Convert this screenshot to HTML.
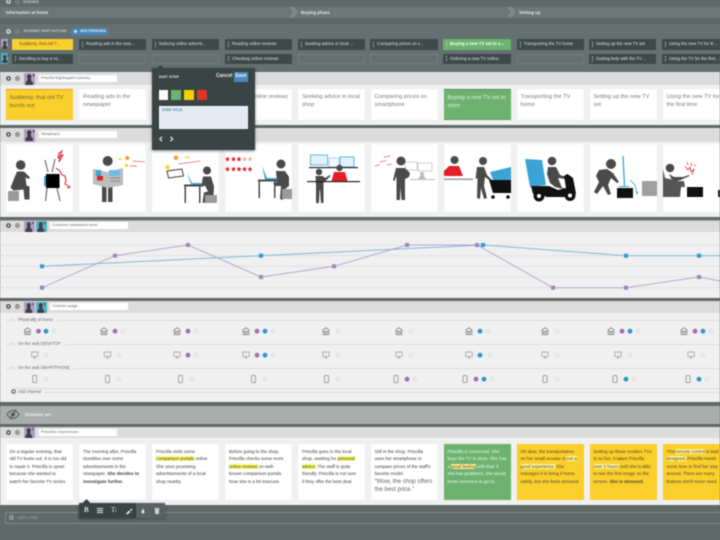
<!DOCTYPE html>
<html><head><meta charset="utf-8"><style>
html,body{margin:0;padding:0;background:#5f6968}
#p{position:relative;width:720px;height:540px;overflow:hidden;background:#5f6968;font-family:"Liberation Sans",sans-serif;filter:blur(.42px)}
#p div,#p svg.a{position:absolute}
.t{white-space:nowrap}
.chip{height:10.5px;line-height:10.5px;background:#3e4949;color:#dfe4e3;font-size:4.3px;padding-left:7px;box-sizing:border-box;white-space:nowrap;overflow:hidden;border-radius:.5px}
.chip:before{content:"";position:absolute;left:3px;top:2.5px;height:5px;border-left:1px dotted #c9d0cf}
.e{height:10.5px;border:1px solid #727c7b;box-sizing:border-box}
.head{left:0;width:720px;background:#dcdcdc}
.in{background:#fff;height:7px;line-height:7px;font-size:3.8px;color:#666;padding-left:2px;box-sizing:border-box;white-space:nowrap}
.card{background:#fff;width:67px;box-shadow:0 0 1px #ddd}
.st{top:89px;height:31px;font-size:5.7px;line-height:7.5px;color:#777;padding:5px 0 0 4px;box-sizing:border-box;white-space:nowrap;overflow:hidden}
.sb{top:144px;height:68px}
.ex{top:444px;height:56px;font-size:4.5px;line-height:7.5px;color:#3a3a3a;padding:3.5px 0 0 4px;box-sizing:border-box;white-space:nowrap;overflow:hidden}
.y{background:#fbfb66}
.ly{background:#fff48e;color:#444}
.lab{left:15px;font-size:4.2px;color:#666;background:#f0f0f0;padding:0 3px;white-space:nowrap}
.gl{left:6px;width:714px;height:.7px;background:#dcdcdc}
</style></head><body><div id="p">
<svg width="0" height="0" style="position:absolute"><defs>
<symbol id="g" viewBox="0 0 10 10"><circle cx="5" cy="5" r="3.2" fill="none" stroke="currentColor" stroke-width="2"/><path d="M5 0v2M5 8v2M0 5h2M8 5h2M1.5 1.5l1.4 1.4M7.1 7.1l1.4 1.4M8.5 1.5L7.1 2.9M2.9 7.1L1.5 8.5" stroke="currentColor" stroke-width="1.4"/></symbol>
<symbol id="ey" viewBox="0 0 10 10"><circle cx="5" cy="5" r="4" fill="none" stroke="currentColor" stroke-width="1.3"/><circle cx="5" cy="5" r="1.7" fill="currentColor"/></symbol>
<symbol id="pf" viewBox="0 0 11 12"><circle cx="5.2" cy="3.5" r="2.3" fill="#3e3e46"/><path d="M3.6 5.5h3.2l.8 3.2h1.4V12H1.6V8.7h1.2z" fill="#3e3e46"/><rect x="9.2" y="1" width="1" height="2.5" fill="#333"/></symbol>
<symbol id="h" viewBox="0 0 8 8"><path d="M.5 3.5L4 .6l3.5 2.9M1.2 3.2V7.6h5.6V3.2M3 4.5h2v3H3zM1.2 4.5h5.6" fill="none" stroke="#8d9190" stroke-width=".9"/></symbol>
<symbol id="m" viewBox="0 0 8 8"><path d="M.8 1h6.4v4.4H.8zM2.6 7h2.8M4 5.4V7" fill="none" stroke="#a9adac" stroke-width=".9"/></symbol>
<symbol id="ph" viewBox="0 0 8 8"><rect x="2" y=".5" width="4" height="7" rx=".8" fill="none" stroke="#9b9f9e" stroke-width=".9"/></symbol>
<symbol id="st" viewBox="0 0 10 10"><path d="M5 0l1.5 3.3 3.5.4-2.6 2.4.7 3.6L5 8 1.900 9.700l.7-3.600L0 3.700l3.500-.4z"/></symbol>
</defs></svg>

<!-- stages -->
<div style="left:0;top:7px;width:720px;height:10.500px;background:#6d7776"></div>
<svg class="a" style="left:6px;top:-1px" width="5" height="5" color="#e4e8e7"><use href="#g" width="5" height="5"/></svg>
<svg class="a" style="left:15px;top:-1px" width="5" height="5" color="#8a9392"><use href="#ey" width="5" height="5"/></svg>
<div class="t" style="left:23px;top:-1px;font-size:3.900px;line-height:5px;font-weight:bold;color:#cfd5d4">STAGES</div>
<div class="t" style="left:6px;top:9.500px;font-size:4.400px;line-height:6px;font-weight:bold;color:#e4e8e7">Information at home</div>
<div class="t" style="left:301px;top:9.500px;font-size:4.400px;line-height:6px;font-weight:bold;color:#e4e8e7">Buying phase</div>
<div class="t" style="left:519px;top:9.500px;font-size:4.400px;line-height:6px;font-weight:bold;color:#e4e8e7">Setting up</div>
<svg class="a" style="left:289px;top:6px" width="9" height="12"><path d="M1 .5L5 6 1 11.500M3.500 .5L7.500 6l-4 5.500" fill="none" stroke="#9ca5a4" stroke-width=".7"/></svg>
<svg class="a" style="left:507px;top:6px" width="9" height="12"><path d="M1 .5L5 6 1 11.500M3.500 .5L7.500 6l-4 5.500" fill="none" stroke="#9ca5a4" stroke-width=".7"/></svg>
<div style="left:0;top:17.500px;width:720px;height:6.500px;background:#5c6665"></div>

<!-- outline -->
<div style="left:0;top:24px;width:720px;height:48px;background:#657170"></div>
<svg class="a" style="left:6px;top:28.500px" width="5" height="5" color="#e8ebea"><use href="#g" width="5" height="5"/></svg>
<svg class="a" style="left:15px;top:28.500px" width="5" height="5" color="#8a9392"><use href="#ey" width="5" height="5"/></svg>
<div class="t" style="left:23px;top:28.500px;font-size:3.700px;line-height:5px;font-weight:bold;color:#c5cccb">JOURNEY MAP OUTLINE</div>
<div class="t" style="left:71px;top:28px;width:37px;height:7px;line-height:7px;background:#4a85b8;color:#e8f0f6;font-size:3.500px;font-weight:bold;padding-left:9px;box-sizing:border-box;border-radius:1px">ADD PERSONA</div>
<div style="left:73.500px;top:29.700px;width:3.500px;height:3.500px;border-radius:50%;background:#dfe8f0"></div>
<div style="left:1px;top:39px;width:7px;height:10px;background:#b39ec2"></div>
<svg class="a" style="left:1px;top:39.500px" width="8" height="9"><use href="#pf" width="8" height="9"/></svg>
<div style="left:1px;top:53px;width:7px;height:10.500px;background:#4fb2c4"></div>
<svg class="a" style="left:1px;top:54px" width="8" height="9"><use href="#pf" width="8" height="9"/></svg>

<div class="chip" style="left:12px;top:39px;width:60.500px;background:#fbcf2b;color:#5a5130">Suddenly, that old T…</div>
<div class="chip" style="left:79px;top:39px;width:66.500px">Reading ads in the new…</div>
<div class="chip" style="left:152px;top:39px;width:66.500px">Noticing online adverts…</div>
<div class="chip" style="left:225px;top:39px;width:66.500px">Reading online reviews</div>
<div class="chip" style="left:298px;top:39px;width:66.500px">Seeking advice in local …</div>
<div class="chip" style="left:370px;top:39px;width:67.500px">Comparing prices on s…</div>
<div class="chip" style="left:443px;top:39px;width:68px;background:#6db36f;color:#fff;font-weight:bold">Buying a new TV set in s…</div>
<div class="chip" style="left:516.500px;top:39px;width:67px">Transporting the TV home</div>
<div class="chip" style="left:589px;top:39px;width:67px">Setting up the new TV set</div>
<div class="chip" style="left:662px;top:39px;width:58px">Using the new TV for th…</div>

<div class="chip" style="left:12px;top:53.500px;width:60.500px">Deciding to buy a ne…</div>
<div class="e" style="left:79px;top:53.500px;width:66.500px"></div>
<div class="e" style="left:152px;top:53.500px;width:66.500px"></div>
<div class="chip" style="left:225px;top:53.500px;width:66.500px">Checking online reviews</div>
<div class="e" style="left:298px;top:53.500px;width:66.500px"></div>
<div class="e" style="left:370px;top:53.500px;width:67.500px"></div>
<div class="chip" style="left:443px;top:53.500px;width:68px">Ordering a new TV online</div>
<div class="e" style="left:516.500px;top:53.500px;width:67px"></div>
<div class="chip" style="left:589px;top:53.500px;width:67px">Getting help with the TV…</div>
<div class="chip" style="left:662px;top:53.500px;width:58px">Using the TV for the first…</div>

<!-- journey lane -->
<div style="left:0;top:72px;width:720px;height:53px;background:#f0f0f0"></div>
<div class="head" style="top:72px;height:13px"></div>
<svg class="a" style="left:6px;top:75.500px" width="5" height="5" color="#3e3e3e"><use href="#g" width="5" height="5"/></svg>
<svg class="a" style="left:14.500px;top:75.500px" width="5" height="5" color="#555"><use href="#ey" width="5" height="5"/></svg>
<div style="left:24px;top:73px;width:11px;height:12px;background:#b39ec2"></div>
<svg class="a" style="left:24px;top:73px" width="11" height="12"><use href="#pf" width="11" height="12"/></svg>
<div class="in" style="left:39px;top:74.500px;width:78px">Priscilla Nightingale's journey</div>

<div class="card st" style="left:5.500px;background:#fbcf2b;color:#6d6238;border-top:1.500px solid #e5a52a">Suddenly, that old TV<br>bursts out</div>
<div class="card st" style="left:79px">Reading ads in the<br>newspaper</div>
<div class="card st" style="left:152px">Noticing online<br>adverts</div>
<div class="card st" style="left:225px">Reading online reviews</div>
<div class="card st" style="left:298px">Seeking advice in local<br>shop</div>
<div class="card st" style="left:370.500px">Comparing prices on<br>smartphone</div>
<div class="card st" style="left:443.500px;width:67.500px;background:#6db36f;color:#e4f0e4;border-top:1.500px solid #4f8f52;border-bottom:1px solid #5f9f62">Buying a new TV set in<br>store</div>
<div class="card st" style="left:516.500px">Transporting the TV<br>home</div>
<div class="card st" style="left:589.500px">Setting up the new TV<br>set</div>
<div class="card st" style="left:662.500px;width:58px">Using the new TV for<br>the first time</div>

<div style="left:0;top:125px;width:720px;height:3px;background:#5f6b6a"></div>

<!-- storyboard lane -->
<div style="left:0;top:128px;width:720px;height:89px;background:#f0f0f0"></div>
<div class="head" style="top:128px;height:14px"></div>
<svg class="a" style="left:6px;top:131.500px" width="5" height="5" color="#3e3e3e"><use href="#g" width="5" height="5"/></svg>
<svg class="a" style="left:14.500px;top:131.500px" width="5" height="5" color="#555"><use href="#ey" width="5" height="5"/></svg>
<div style="left:24px;top:129px;width:11px;height:12.500px;background:#b39ec2"></div>
<svg class="a" style="left:24px;top:129px" width="11" height="12"><use href="#pf" width="11" height="12"/></svg>
<div class="in" style="left:39px;top:130.500px;width:78px">Storyboard</div>
<div class="card sb" style="left:5.500px"></div>
<div class="card sb" style="left:79px"></div>
<div class="card sb" style="left:152px"></div>
<div class="card sb" style="left:225px"></div>
<div class="card sb" style="left:298px"></div>
<div class="card sb" style="left:370.500px"></div>
<div class="card sb" style="left:443.500px;width:67.500px"></div>
<div class="card sb" style="left:516.500px"></div>
<div class="card sb" style="left:589.500px"></div>
<div class="card sb" style="left:662.500px;width:58px"></div>

<svg class="a" style="left:0;top:0" width="720" height="217">
<g fill="#4a4a4a" stroke="none">
<!-- 1 -->
<rect x="8" y="191" width="11" height="10" fill="#9b9b9b"/>
<circle cx="20.700" cy="165" r="4.800"/>
<path d="M17 171.500h7l6 6-1.500 1.500-3-1.500 1 8 3 1v13h-5l-1-10-10 1-3-3z"/>
<path d="M48 172l-3-12M52 172l3-13M47 188l-1.500 13M57 188l3 13" stroke="#777" stroke-width="1.300" fill="none"/>
<rect x="44" y="176" width="3" height="10" fill="#3ba4d6"/>
<rect x="46" y="174" width="13.500" height="14" fill="#000"/>
<path d="M59 153l3-2-2 5 3-1-4 7 1-5-2 1zM56 168l4 3 2 4 3 1 1 4-1 4 5 3-3 1" fill="none" stroke="#e51e2a" stroke-width="1"/>
<!-- 2 -->
<circle cx="107.700" cy="161" r="5"/>
<rect x="102" y="184" width="4.500" height="18"/><rect x="108" y="184" width="4.500" height="18"/>
<path d="M93 169l14 3 16-4v17l-15 3-15-4z" fill="#bdbdbd"/>
<rect x="96" y="170" width="5" height="6" fill="#3ba4d6"/><rect x="109" y="170" width="11" height="6" fill="#6cc0e8"/>
<rect x="97" y="176" width="6" height="4.500" fill="#e51e2a"/>
<path d="M110 178h10M110 181h10" stroke="#777" stroke-width=".8"/>
<rect x="118" y="158.500" width="4" height="1.300" fill="#f4d21c"/>
<use href="#st" x="124.500" y="155" width="5.500" height="5.500" fill="#f18c22"/>
<rect x="125" y="164" width="3" height="3" fill="#f4d21c"/>
<path d="M133 161l12 1M130 166h7" stroke="#e8424c" stroke-width=".9" stroke-dasharray="1.200 .5"/>
<!-- 3 -->
<use href="#st" x="173" y="154.500" width="6" height="6" fill="#f18c22"/>
<rect x="185" y="156.500" width="4.500" height="1.300" fill="#f4d21c"/>
<path d="M179 164l21-3" stroke="#e8424c" stroke-width=".9" stroke-dasharray="1.200 .5"/>
<use href="#st" x="164.500" y="164" width="6" height="6" fill="#f4d21c"/>
<path d="M167 171l15-2 1.500 7-15 2z" fill="#fff" stroke="#333" stroke-width=".9"/>
<circle cx="207" cy="170.500" r="4"/>
<path d="M203 176.500h8l3 10-.5 9-6 .5-2 7-3-.5 1.500-10 4-1-3-6h-3.500z"/>
<rect x="184" y="184.500" width="20" height="2"/><rect x="184.500" y="186" width="1.500" height="17"/><rect x="199" y="186" width="1.500" height="17"/>
<path d="M187 173l5 10h10v1.500h-11z" fill="#3ba4d6"/>
<rect x="205" y="195" width="12" height="8" fill="#9b9b9b"/>
<!-- 4 -->
<g fill="#e51e2a"><use href="#st" x="225" y="156.500" width="5" height="5"/><use href="#st" x="231" y="156.500" width="5" height="5"/><use href="#st" x="236.500" y="156.500" width="5" height="5"/><use href="#st" x="242" y="156.500" width="5" height="5" fill="#f2b49a"/><use href="#st" x="247.500" y="156.500" width="5" height="5" fill="#f2b49a"/><use href="#st" x="225" y="166.500" width="5" height="5"/><use href="#st" x="231" y="166.500" width="5" height="5"/><use href="#st" x="236.500" y="166.500" width="5" height="5"/><use href="#st" x="242" y="166.500" width="5" height="5"/><use href="#st" x="247.500" y="166.500" width="5" height="5"/></g>
<circle cx="281" cy="164" r="4.500"/>
<path d="M276 171h9l4 6v9l-4 3-2 11-3-1 1-13h-6l-2-3 4-1z"/>
<rect x="258" y="179.500" width="20" height="2"/><rect x="258.500" y="181" width="1.500" height="17"/><rect x="274" y="181" width="1.500" height="17"/>
<path d="M262 166l5 12h10v1.500h-12z" fill="#3ba4d6"/>
<rect x="282" y="189" width="10" height="10" fill="#9b9b9b"/>
<!-- 5 -->
<rect x="310.500" y="155" width="17" height="10" fill="#e4f3fb" stroke="#4cb0e0" stroke-width=".9"/>
<rect x="329" y="158" width="10" height="9" fill="#f2f8fb" stroke="#8cc6e6" stroke-width=".7"/>
<rect x="340" y="157" width="14" height="10" fill="#e4f3fb" stroke="#4cb0e0" stroke-width=".9"/>
<rect x="309" y="167" width="49" height="1.200" fill="#222"/>
<circle cx="319" cy="172" r="3.200"/>
<path d="M315.500 176h7l3 2 4-3 1 1-5 5-2 0v22h-2.500l-1-13h-.5l-.5 13h-3v-18z"/>
<circle cx="339.500" cy="168" r="3.200"/>
<path d="M334 172h11l2.500 9h-16z" fill="#e51e2a"/>
<rect x="307" y="181" width="53" height="1.200" fill="#222"/>
<!-- 6 -->
<path d="M375 166l5-1.500M380 162l6-1.500M387 165l5-1M384 157l6-1" stroke="#e8424c" stroke-width=".9" stroke-dasharray="1.200 .5"/>
<rect x="405" y="162" width="12" height="8" fill="#fff" stroke="#bbb" stroke-width=".7"/><rect x="418" y="163" width="14" height="8" fill="#fff" stroke="#bbb" stroke-width=".7"/>
<circle cx="422" cy="174" r="2" fill="#bbb"/><path d="M418 179l2-3h4l2 3z" fill="#bbb"/>
<rect x="410" y="179" width="25" height="1" fill="#bbb"/>
<circle cx="401" cy="161" r="4.500"/>
<path d="M396 168h9l5 5-1 4-4 2v21h-3.500l-1-13-.5 13h-3.500v-24l-2 5-1.500-1z"/>
<!-- 7 -->
<circle cx="454.500" cy="160" r="4"/>
<path d="M444 171l5-5h10l4 10h-19z" fill="#e51e2a"/>
<rect x="444" y="178.500" width="29" height="1.500" fill="#999"/>
<circle cx="483" cy="161" r="4"/>
<path d="M477 167h7l3 8 6 6-1 1-7-5-1 9 3 12-3 1-3-11-1 11-3-1 .5-20-2 1z"/>
<path d="M490 172l21-5v13l-17 2z" fill="#3ba4d6"/>
<path d="M489 180h22v13h-18z" fill="#111"/>
<circle cx="493" cy="197" r="1.800" fill="#111"/><circle cx="508" cy="197" r="1.800" fill="#111"/>
<path d="M490 193.500h21" stroke="#fff" stroke-width=".6"/>
<!-- 8 -->
<path d="M525 159l17 1 4 25-16 2z" fill="#3ba4d6"/>
<circle cx="552" cy="161" r="4.300"/>
<path d="M548 167h8l4 8 6 2 0 2-8-1 4 10 3 0-2 1-8-2-5-4-3-9z"/>
<path d="M531 186h18l9 4 8-2-2-12 3-2 2 1 4 3 2 10 1 6h-6l-4 3H546l-3-3h-10z" fill="#111"/>
<circle cx="539" cy="196" r="5.500" fill="#111"/><circle cx="539" cy="196" r="2" fill="#fff"/>
<circle cx="570" cy="195.500" r="5.500" fill="#111"/><circle cx="570" cy="195.500" r="2" fill="#fff"/>
<!-- 9 -->
<circle cx="611" cy="164" r="5"/>
<path d="M599 170l8-1 6 4 6 9-2 1-6-5-3 7 3 9-3 1-5-9-6 8-3-2 5-10-3-6z"/>
<path d="M623 156l1.500 30" stroke="#3ba4d6" stroke-width="1.300" fill="none"/>
<path d="M619 186.500h10" stroke="#3ba4d6" stroke-width="1"/>
<rect x="617" y="188" width="16" height="10" fill="#111"/>
<path d="M630 180l5 5 2 8M636 191l1 3 1-2" fill="none" stroke="#3ba4d6" stroke-width=".8"/>
<rect x="642" y="181" width="15" height="15" fill="#9f9f9f"/>
<!-- 10 -->
<path d="M663 169l2 9 14 3h5l1 6h-4l-1 10h-17z" fill="#555"/>
<circle cx="670" cy="168" r="4.300"/>
<path d="M669 174l5 3 9 0 6-2 .5 1-9 4-5 1-4-2z"/>
<rect x="687" y="187" width="16" height="10" fill="#111"/>
<path d="M685 166l3 4 2-3 1 5 3-3-2 6M687 162l1 3M691 163l1 3M694 165l2 1" fill="none" stroke="#e8424c" stroke-width=".9"/>
<rect x="718" y="190" width="2" height="7" fill="#222"/>
</g>
</svg>

<div style="left:0;top:217px;width:720px;height:3px;background:#5f6b6a"></div>

<!-- chart lane -->
<div style="left:0;top:220px;width:720px;height:78px;background:#f0f0f0"></div>
<div class="head" style="top:220px;height:11.500px;border-top:1px solid #aaa;box-sizing:border-box"></div>
<svg class="a" style="left:6px;top:223px" width="5" height="5" color="#3e3e3e"><use href="#g" width="5" height="5"/></svg>
<svg class="a" style="left:14.500px;top:223px" width="5" height="5" color="#555"><use href="#ey" width="5" height="5"/></svg>
<div style="left:24px;top:221px;width:11px;height:10.500px;background:#b39ec2"></div>
<svg class="a" style="left:24px;top:220.500px" width="10" height="11"><use href="#pf" width="10" height="11"/></svg>
<div style="left:36px;top:221px;width:10.500px;height:10.500px;background:#4fb2c4"></div>
<svg class="a" style="left:36px;top:220.500px" width="10" height="11"><use href="#pf" width="10" height="11"/></svg>
<div class="in" style="left:50px;top:222px;width:78px">Customer satisfaction level</div>
<svg class="a" style="left:0;top:220px" width="720" height="80">
<path d="M6 25h714M6 35.700h714M6 46.300h714M6 57h714M6 67.700h714" stroke="#dedede" stroke-width=".8"/>
<path d="M1.500 25h2M1.500 35.700h2M1.500 46.300h2M1.500 57h2M1.500 67.700h2" stroke="#bbb" stroke-width=".8"/>
<path d="M42 46.300L261 35.700 483 25 626 35.700H720" fill="none" stroke="#7cbbd8" stroke-width="1"/>
<path d="M42 67.700L115 35.700 188 25 261 57 334 46.300 407 25H477L553 67.700H626L699 57 720 61" fill="none" stroke="#b8a5cb" stroke-width="1"/>
<g fill="#a184b8"><rect x="40" y="65.700" width="4" height="4"/><rect x="113" y="33.700" width="4" height="4"/><rect x="186" y="23" width="4" height="4"/><rect x="259" y="55" width="4" height="4"/><rect x="332" y="44.300" width="4" height="4"/><rect x="405" y="23" width="4" height="4"/><rect x="475" y="23" width="4" height="4"/><rect x="551" y="65.700" width="4" height="4"/><rect x="624" y="65.700" width="4" height="4"/><rect x="697" y="55" width="4" height="4"/></g>
<g fill="#2f9bcf"><rect x="40" y="44.300" width="4" height="4"/><rect x="259" y="33.700" width="4" height="4"/><rect x="481" y="23" width="4" height="4"/><rect x="624" y="33.700" width="4" height="4"/><rect x="697" y="33.700" width="4" height="4"/></g>
</svg>
<div style="left:0;top:298px;width:720px;height:3px;background:#5f6b6a"></div>

<!-- channel lane -->
<div style="left:0;top:301px;width:720px;height:101px;background:#f0f0f0"></div>
<div class="head" style="top:301px;height:11.500px"></div>
<svg class="a" style="left:6px;top:304px" width="5" height="5" color="#3e3e3e"><use href="#g" width="5" height="5"/></svg>
<svg class="a" style="left:14.500px;top:304px" width="5" height="5" color="#555"><use href="#ey" width="5" height="5"/></svg>
<div style="left:24px;top:302px;width:11px;height:10.500px;background:#b39ec2"></div>
<svg class="a" style="left:24px;top:301.500px" width="10" height="11"><use href="#pf" width="10" height="11"/></svg>
<div style="left:36px;top:302px;width:10.500px;height:10.500px;background:#4fb2c4"></div>
<svg class="a" style="left:36px;top:301.500px" width="10" height="11"><use href="#pf" width="10" height="11"/></svg>
<div class="in" style="left:50px;top:303px;width:78px">Channel usage</div>
<div class="gl" style="top:319.500px"></div><div class="gl" style="top:343.500px"></div><div class="gl" style="top:367.500px"></div><div class="gl" style="top:388px;left:14px;"></div>
<div class="gl" style="top:392px;left:14px;"></div>
<div class="lab t" style="top:317px;line-height:5px">Physically at home</div>
<div class="lab t" style="top:341px;line-height:5px">On the web DESKTOP</div>
<div class="lab t" style="top:365px;line-height:5px">On the web SMARTPHONE</div>
<div class="lab t" style="top:389px;line-height:5px;left:10px;padding-left:8px">Add channel</div>
<svg class="a" style="left:11px;top:389px" width="5" height="5" color="#666"><use href="#g" width="5" height="5"/></svg>
<svg class="a" style="left:0;top:300px" width="720" height="100">
<g><circle cx="13" cy="19.500" r="1.500" fill="#dfdfdf"/><circle cx="13" cy="43.500" r="1.500" fill="#dfdfdf"/><circle cx="13" cy="67.500" r="1.500" fill="#dfdfdf"/>
<use href="#h" x="23.500" y="27" width="8" height="8"/><use href="#h" x="100" y="27" width="8" height="8"/><use href="#h" x="173" y="27" width="8" height="8"/><use href="#h" x="242" y="27" width="8" height="8"/><use href="#h" x="322" y="27" width="8" height="8"/><use href="#h" x="395" y="27" width="8" height="8"/><use href="#h" x="465" y="27" width="8" height="8"/><use href="#h" x="541" y="27" width="8" height="8"/><use href="#h" x="607" y="27" width="8" height="8"/><use href="#h" x="680" y="27" width="8" height="8"/>
<use href="#m" x="30.700" y="51" width="8" height="8"/><use href="#m" x="103.500" y="51" width="8" height="8"/><use href="#m" x="173" y="51" width="8" height="8"/><use href="#m" x="242" y="51" width="8" height="8"/><use href="#m" x="322" y="51" width="8" height="8"/><use href="#m" x="395" y="51" width="8" height="8"/><use href="#m" x="465" y="51" width="8" height="8"/><use href="#m" x="541" y="51" width="8" height="8"/><use href="#m" x="614" y="51" width="8" height="8"/><use href="#m" x="687" y="51" width="8" height="8"/>
<use href="#ph" x="30.700" y="75" width="8" height="8"/><use href="#ph" x="103.500" y="75" width="8" height="8"/><use href="#ph" x="176.500" y="75" width="8" height="8"/><use href="#ph" x="249.500" y="75" width="8" height="8"/><use href="#ph" x="322.500" y="75" width="8" height="8"/><use href="#ph" x="392" y="75" width="8" height="8"/><use href="#ph" x="461" y="75" width="8" height="8"/><use href="#ph" x="541" y="75" width="8" height="8"/><use href="#ph" x="611" y="75" width="8" height="8"/><use href="#ph" x="684" y="75" width="8" height="8"/></g>
<g fill="#9c6fb0">
<circle cx="38.500" cy="31.200" r="2.400"/><circle cx="115" cy="31.200" r="2.400"/><circle cx="188" cy="31.200" r="2.400"/><circle cx="257" cy="31.200" r="2.400"/><circle cx="622" cy="31.200" r="2.400"/><circle cx="695" cy="31.200" r="2.400"/>
<circle cx="188" cy="55.200" r="2.400"/><circle cx="257" cy="55.200" r="2.400"/>
<circle cx="407" cy="79.200" r="2.400"/><circle cx="476" cy="79.200" r="2.400"/></g>
<g fill="#2a97cf">
<circle cx="46" cy="31.200" r="2.400"/><circle cx="265" cy="31.200" r="2.400"/><circle cx="480" cy="31.200" r="2.400"/><circle cx="630" cy="31.200" r="2.400"/><circle cx="703" cy="31.200" r="2.400"/>
<circle cx="265" cy="55.200" r="2.400"/><circle cx="480" cy="55.200" r="2.400"/>
<circle cx="484" cy="79.200" r="2.400"/><circle cx="626" cy="79.200" r="2.400"/><circle cx="699" cy="79.200" r="2.400"/></g>
<g fill="none" stroke="#dcdcdc" stroke-width="1">
<circle cx="54" cy="31.200" r="1.800"/><circle cx="123" cy="31.200" r="1.800"/><circle cx="196" cy="31.200" r="1.800"/><circle cx="273" cy="31.200" r="1.800"/><circle cx="338" cy="31.200" r="1.800"/><circle cx="411" cy="31.200" r="1.800"/><circle cx="488" cy="31.200" r="1.800"/><circle cx="557" cy="31.200" r="1.800"/><circle cx="638" cy="31.200" r="1.800"/><circle cx="711" cy="31.200" r="1.800"/>
<circle cx="46" cy="55.200" r="1.800"/><circle cx="119" cy="55.200" r="1.800"/><circle cx="196" cy="55.200" r="1.800"/><circle cx="273" cy="55.200" r="1.800"/><circle cx="338" cy="55.200" r="1.800"/><circle cx="411" cy="55.200" r="1.800"/><circle cx="490" cy="55.200" r="1.800"/><circle cx="557" cy="55.200" r="1.800"/><circle cx="630" cy="55.200" r="1.800"/><circle cx="703" cy="55.200" r="1.800"/>
<circle cx="46" cy="79.200" r="1.800"/><circle cx="119" cy="79.200" r="1.800"/><circle cx="192" cy="79.200" r="1.800"/><circle cx="265" cy="79.200" r="1.800"/><circle cx="338" cy="79.200" r="1.800"/><circle cx="415" cy="79.200" r="1.800"/><circle cx="492" cy="79.200" r="1.800"/><circle cx="557" cy="79.200" r="1.800"/><circle cx="634" cy="79.200" r="1.800"/><circle cx="707" cy="79.200" r="1.800"/></g>
</svg>

<div style="left:0;top:402px;width:720px;height:3.500px;background:#5f6b6a"></div>
<div style="left:0;top:405.500px;width:720px;height:18.500px;background:#a9aeac"></div>
<svg class="a" style="left:6px;top:408px" width="14" height="13"><path d="M1 6.500C3 3.500 5 2.500 7 2.500s4 1 6 4c-2 3-4 4-6 4s-4-1-6-4z" fill="none" stroke="#555" stroke-width="1"/><circle cx="7" cy="6.500" r="2" fill="#555"/><path d="M10 1.500L4 11.500" stroke="#555" stroke-width="1"/></svg>
<div class="t" style="left:25px;top:411px;font-size:4.400px;line-height:7px;font-weight:bold;color:#f0f2f1">Dramatic arc</div>
<div style="left:0;top:424px;width:720px;height:3px;background:#5f6b6a"></div>

<!-- experience lane -->
<div style="left:0;top:427px;width:720px;height:78px;background:#f0f0f0"></div>
<div class="head" style="top:427px;height:11px"></div>
<svg class="a" style="left:6px;top:429.500px" width="5" height="5" color="#3e3e3e"><use href="#g" width="5" height="5"/></svg>
<svg class="a" style="left:14.500px;top:429.500px" width="5" height="5" color="#555"><use href="#ey" width="5" height="5"/></svg>
<div style="left:24px;top:427px;width:11px;height:11px;background:#b39ec2"></div>
<svg class="a" style="left:24px;top:427px" width="10" height="11"><use href="#pf" width="10" height="11"/></svg>
<div class="in" style="left:39px;top:428.500px;width:78px">Priscilla's experiences</div>

<div class="card ex" style="left:5.500px">On a regular evening, that<br>old TV busts out. It is too old<br>to repair it. Priscilla is upset<br>because she wanted to<br>watch her favorite TV series.</div>
<div class="card ex" style="left:79px">The morning after, Priscilla<br>stumbles over some<br>advertisements in the<br>newspaper. <b>She decides to<br>investigate further.</b></div>
<div class="card ex" style="left:152px">Priscilla visits some<br><span class="y">comparison portals</span> online.<br>She sees promising<br>advertisements of a local<br>shop nearby.</div>
<div class="card ex" style="left:225px">Before going to the shop,<br>Priscilla checks some more<br><span class="y">online reviews</span> on well-<br>known comparison portals.<br>Now she is a bit insecure.</div>
<div class="card ex" style="left:298px">Priscilla goes to the local<br>shop, seeking for <span class="y">personal<br>advice.</span> The staff is quite<br>friendly. Priscilla is not sure<br>if they offer the best deal.</div>
<div class="card ex" style="left:370.500px">Still in the shop, Priscilla<br>uses her smartphone to<br>compare prices of the staff's<br>favorite model.<br><span style="font-size:6px;color:#666;line-height:7.500px">“Wow, the shop offers<br>the best price.”</span></div>
<div class="card ex" style="left:443.500px;width:67.500px;background:#6db36f;color:#f2f7f2">Priscilla is convinced. She<br>buys the TV in store. She has<br>a <span class="ly">good feeling</span> with that: if<br>she has problems, she would<br>know someone to go to.</div>
<div class="card ex" style="left:516.500px;background:#fbcf2b;color:#4a4230">Oh dear, the transportation<br>on her small scooter is <span class="ly">not a<br>good experience.</span> She<br>manages it to bring it home<br>safely, but she feels stressed.</div>
<div class="card ex" style="left:589.500px;background:#fbcf2b;color:#4a4230">Setting up these modern TVs<br>is no fun. It takes Priscilla<br><span class="ly">over 2 hours</span> until she is able<br>to see the first image on the<br>screen. <b>She is stressed.</b></div>
<div class="card ex" style="left:662.500px;width:58px;background:#fbcf2b;color:#4a4230">This <span class="ly">remote control</span> is bad<br><span class="ly">designed.</span> Priscilla needs<br>some time to find her way<br>around. There are many<br>buttons she'll never need.</div>

<div style="left:0;top:505px;width:720px;height:35px;background:#5f6968"></div>
<div style="left:5px;top:511.500px;width:720px;height:12px;border:.8px solid #808a89;box-sizing:border-box"></div>
<svg class="a" style="left:9px;top:515px" width="5" height="5" color="#aab2b1"><use href="#g" width="5" height="5"/></svg>
<div class="t" style="left:17px;top:514.500px;font-size:4.200px;line-height:6px;color:#a2abaa">ADD LANE</div>

<!-- toolbar -->
<div style="left:83.500px;top:499.500px;width:5px;height:5px;background:#3a4444;transform:rotate(45deg)"></div>
<div style="left:79px;top:503px;width:57px;height:15px;background:#3a4444;box-shadow:0 1px 3px rgba(0,0,0,.4)"></div>
<div style="left:136px;top:503px;width:29px;height:15px;background:#586261;box-shadow:0 1px 3px rgba(0,0,0,.3)"></div>
<div class="t" style="left:84px;top:506px;font:bold 7px/9px 'Liberation Serif',serif;color:#dfe3e2">B</div>
<svg class="a" style="left:96px;top:506.500px" width="120" height="8">
<path d="M1 1.500h6M1 3.500h6M1 5.500h6" stroke="#dfe3e2" stroke-width="1.100"/>
<path d="M30 6.500l3-3 1.500 1.500L31 7.500zM34 3l1.500-1.500 1 1L35 4" fill="#eef0ef"/>
<path d="M47 6.500a1.500 1.500 0 0 0 1.500-1.500c0-1-1.500-3.500-1.500-3.500s-1.500 2.500-1.500 3.500A1.500 1.500 0 0 0 47 6.500z" fill="#dfe3e2"/>
<rect x="59" y="2" width="4" height="5" fill="#cdd2d1"/><path d="M58.500 1.500h5" stroke="#cdd2d1" stroke-width=".9"/>
</svg>
<div class="t" style="left:111px;top:506px;font:7px/9px 'Liberation Serif',serif;color:#dfe3e2">T<span style="font-size:4px">I</span></div>

<!-- popover -->
<div style="left:158px;top:65.500px;width:5px;height:5px;background:#3a4444;transform:rotate(45deg)"></div>
<div style="left:152px;top:68px;width:103px;height:82px;background:#3a4444;box-shadow:0 1px 3px rgba(0,0,0,.45)"></div>
<div class="t" style="left:159px;top:74px;font-size:3.900px;line-height:6px;font-weight:bold;color:#dfe3e2">EDIT STEP</div>
<div class="t" style="left:216px;top:72.500px;font-size:5px;line-height:7px;font-weight:bold;color:#e8ebea">Cancel</div>
<div class="t" style="left:234px;top:72px;width:14px;height:9.500px;line-height:9.500px;background:#4a88c0;text-align:center;font-size:5px;font-weight:bold;color:#e8f0f6;border-radius:.5px">Save</div>
<div style="left:158.500px;top:89.500px;width:9.500px;height:10px;background:#fff"></div>
<div style="left:171px;top:89.500px;width:10px;height:10px;background:#6db36f"></div>
<div style="left:184px;top:89.500px;width:10px;height:10px;background:#f7d200"></div>
<div style="left:197px;top:89.500px;width:9.500px;height:10px;background:#e2352a"></div>
<div style="left:158.500px;top:106px;width:89.500px;height:22.500px;background:#e3eaf2;border:.6px solid #f4f7fa;box-sizing:border-box"></div>
<div class="t" style="left:162px;top:108px;font-size:3.600px;line-height:5px;font-weight:bold;color:#4a7fa8">STEP TITLE</div>
<svg class="a" style="left:158px;top:136px" width="16" height="6"><path d="M4 .8L1.800 3 4 5.200M12.500 .8L14.700 3l-2.200 2.200" fill="none" stroke="#eef0ef" stroke-width="1.100"/></svg>
</div></body></html>
